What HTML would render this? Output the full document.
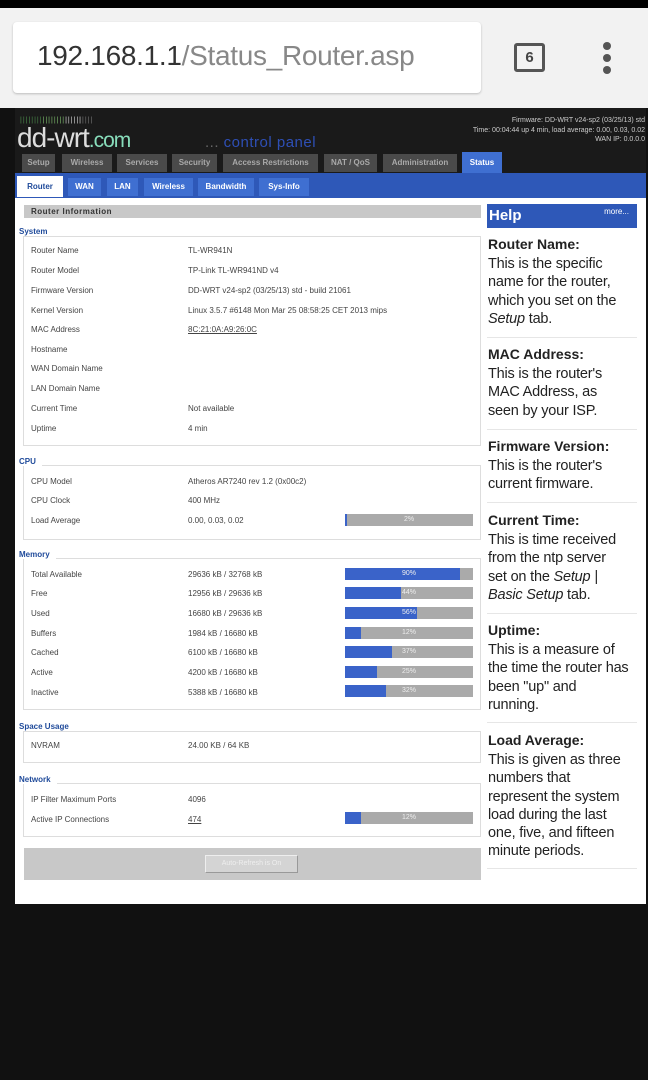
<!DOCTYPE html>
<html><head><meta charset="utf-8"><style>
*{margin:0;padding:0;box-sizing:border-box}
body{width:648px;height:1080px;background:#111;position:relative;overflow:hidden;font-family:"Liberation Sans",sans-serif}
.a{position:absolute;white-space:nowrap}
.lbl{font-size:8px;color:#444}
.fs{position:absolute;border:1px solid #ddd;left:23px;width:458px}
.leg{position:absolute;left:19px;font-size:8px;font-weight:bold;color:#1f4a9a}
.bar{position:absolute;left:345px;width:128px;height:12px;background:#aaa;font-size:7px;color:#eee;text-align:center;line-height:12px}
.bar i{position:absolute;left:0;top:0;bottom:0;background:#3a63c9}
.bar span{position:relative}
.h{font-size:14px;font-weight:bold;color:#222}
.t{font-size:14.5px;color:#222;line-height:18.3px;letter-spacing:-0.2px}
.sep{position:absolute;left:487px;width:150px;border-top:1px solid #e6e6e6}
.tab{position:absolute;top:154px;height:18px;background:#4a4a4a;color:#aaa;font-size:8px;line-height:18px;text-align:center;font-weight:bold}
.st{position:absolute;top:178px;height:18px;background:#3f6fd1;color:#fff;font-size:8px;font-weight:bold;line-height:18px;text-align:center}
</style></head><body>
<div class="a" style="left:0;top:0;width:648px;height:8px;background:#000"></div>
<div class="a" style="left:0;top:8px;width:648px;height:100px;background:#f2f2f2"></div>
<div class="a" style="left:13px;top:22px;width:468px;height:71px;background:#fff;border-radius:4px;box-shadow:0 1px 2px #bbb"></div>
<div class="a" style="left:37px;top:40px;font-size:28px;color:#333;letter-spacing:-0.3px">192.168.1.1<span style="color:#888">/Status_Router.asp</span></div>
<div class="a" style="left:514px;top:43px;width:31px;height:29px;border:3px solid #555;border-radius:3px;font-size:15px;font-weight:bold;color:#444;text-align:center;line-height:23px">6</div>
<div class="a" style="left:603px;top:42px;width:8px;height:8px;border-radius:50%;background:#555"></div>
<div class="a" style="left:603px;top:54px;width:8px;height:8px;border-radius:50%;background:#555"></div>
<div class="a" style="left:603px;top:66px;width:8px;height:8px;border-radius:50%;background:#555"></div>

<div class="a" style="left:15px;top:108px;width:631px;height:796px;background:#fff"></div>
<div class="a" style="left:15px;top:108px;width:631px;height:65px;background:#1a1a1a"></div>
<div class="a" style="left:20px;top:117px;font-size:7px;letter-spacing:1px;color:#4a8a4a">||||||||<span style="color:#7fbf6f">||||||||</span><span style="color:#ddd">||||||</span><span style="color:#777">||||</span></div>
<div class="a" style="left:17px;top:122px;font-size:28px;color:#ddd;letter-spacing:-1px">dd-wrt<span style="font-size:21px;color:#8db">.com</span></div>
<div class="a" style="left:205px;top:134px;font-size:15px;color:#2e4fb5;letter-spacing:0.5px"><span style="color:#666">...</span> control panel</div>
<div class="a" style="right:3px;top:116px;font-size:7px;color:#ccc;text-align:right;line-height:9.5px">Firmware: DD-WRT v24-sp2 (03/25/13) std<br>Time: 00:04:44 up 4 min, load average: 0.00, 0.03, 0.02<br>WAN IP: 0.0.0.0</div>
<div class="tab" style="left:22px;width:33px">Setup</div>
<div class="tab" style="left:62px;width:50px">Wireless</div>
<div class="tab" style="left:117px;width:50px">Services</div>
<div class="tab" style="left:172px;width:45px">Security</div>
<div class="tab" style="left:223px;width:95px">Access Restrictions</div>
<div class="tab" style="left:324px;width:53px">NAT / QoS</div>
<div class="tab" style="left:383px;width:74px">Administration</div>
<div class="a" style="left:462px;top:152px;width:40px;height:21px;background:#3f6fd1;color:#fff;font-size:8px;font-weight:bold;text-align:center;line-height:22px">Status</div>
<div class="a" style="left:15px;top:173px;width:631px;height:25px;background:#2e58b8"></div>
<div class="a" style="left:17px;top:176px;width:46px;height:21px;background:#fff;color:#1f4a9a;font-size:8px;font-weight:bold;text-align:center;line-height:22px">Router</div>
<div class="st" style="left:68px;width:33px">WAN</div>
<div class="st" style="left:107px;width:31px">LAN</div>
<div class="st" style="left:144px;width:49px">Wireless</div>
<div class="st" style="left:198px;width:56px">Bandwidth</div>
<div class="st" style="left:259px;width:50px">Sys-Info</div>

<div class="a" style="left:24px;top:205px;width:457px;height:13px;background:#c8c8c8;font-size:8px;font-weight:bold;color:#333;padding-left:7px;line-height:13px;letter-spacing:.5px">Router Information</div>

<div class="fs" style="top:236px;height:210px"></div><div class="leg a" style="top:227px;background:#fff;padding-right:6px">System</div>
<div class="fs" style="top:465px;height:75px"></div><div class="leg a" style="top:457px;background:#fff;padding-right:6px">CPU</div>
<div class="fs" style="top:558px;height:152px"></div><div class="leg a" style="top:550px;background:#fff;padding-right:6px">Memory</div>
<div class="fs" style="top:731px;height:32px"></div><div class="leg a" style="top:722px;background:#fff;padding-right:6px">Space Usage</div>
<div class="fs" style="top:783px;height:54px"></div><div class="leg a" style="top:775px;background:#fff;padding-right:6px">Network</div>

<div class="a lbl" style="left:31px;top:246px">Router Name</div><div class="a lbl" style="left:188px;top:246px">TL-WR941N</div>
<div class="a lbl" style="left:31px;top:266px">Router Model</div><div class="a lbl" style="left:188px;top:266px">TP-Link TL-WR941ND v4</div>
<div class="a lbl" style="left:31px;top:286px">Firmware Version</div><div class="a lbl" style="left:188px;top:286px">DD-WRT v24-sp2 (03/25/13) std - build 21061</div>
<div class="a lbl" style="left:31px;top:306px">Kernel Version</div><div class="a lbl" style="left:188px;top:306px">Linux 3.5.7 #6148 Mon Mar 25 08:58:25 CET 2013 mips</div>
<div class="a lbl" style="left:31px;top:325px">MAC Address</div><div class="a lbl" style="left:188px;top:325px;text-decoration:underline">8C:21:0A:A9:26:0C</div>
<div class="a lbl" style="left:31px;top:345px">Hostname</div>
<div class="a lbl" style="left:31px;top:364px">WAN Domain Name</div>
<div class="a lbl" style="left:31px;top:384px">LAN Domain Name</div>
<div class="a lbl" style="left:31px;top:404px">Current Time</div><div class="a lbl" style="left:188px;top:404px">Not available</div>
<div class="a lbl" style="left:31px;top:424px">Uptime</div><div class="a lbl" style="left:188px;top:424px">4 min</div>

<div class="a lbl" style="left:31px;top:477px">CPU Model</div><div class="a lbl" style="left:188px;top:477px">Atheros AR7240 rev 1.2 (0x00c2)</div>
<div class="a lbl" style="left:31px;top:496px">CPU Clock</div><div class="a lbl" style="left:188px;top:496px">400 MHz</div>
<div class="a lbl" style="left:31px;top:516px">Load Average</div><div class="a lbl" style="left:188px;top:516px">0.00, 0.03, 0.02</div>
<div class="bar" style="top:514px"><i style="width:2px"></i><span>2%</span></div>

<div class="a lbl" style="left:31px;top:570px">Total Available</div><div class="a lbl" style="left:188px;top:570px">29636 kB / 32768 kB</div><div class="bar" style="top:568px"><i style="width:115px"></i><span>90%</span></div>
<div class="a lbl" style="left:31px;top:589px">Free</div><div class="a lbl" style="left:188px;top:589px">12956 kB / 29636 kB</div><div class="bar" style="top:587px"><i style="width:56px"></i><span>44%</span></div>
<div class="a lbl" style="left:31px;top:609px">Used</div><div class="a lbl" style="left:188px;top:609px">16680 kB / 29636 kB</div><div class="bar" style="top:607px"><i style="width:72px"></i><span>56%</span></div>
<div class="a lbl" style="left:31px;top:629px">Buffers</div><div class="a lbl" style="left:188px;top:629px">1984 kB / 16680 kB</div><div class="bar" style="top:627px"><i style="width:16px"></i><span>12%</span></div>
<div class="a lbl" style="left:31px;top:648px">Cached</div><div class="a lbl" style="left:188px;top:648px">6100 kB / 16680 kB</div><div class="bar" style="top:646px"><i style="width:47px"></i><span>37%</span></div>
<div class="a lbl" style="left:31px;top:668px">Active</div><div class="a lbl" style="left:188px;top:668px">4200 kB / 16680 kB</div><div class="bar" style="top:666px"><i style="width:32px"></i><span>25%</span></div>
<div class="a lbl" style="left:31px;top:688px">Inactive</div><div class="a lbl" style="left:188px;top:688px">5388 kB / 16680 kB</div><div class="bar" style="top:685px"><i style="width:41px"></i><span>32%</span></div>

<div class="a lbl" style="left:31px;top:741px">NVRAM</div><div class="a lbl" style="left:188px;top:741px">24.00 KB / 64 KB</div>
<div class="a lbl" style="left:31px;top:795px">IP Filter Maximum Ports</div><div class="a lbl" style="left:188px;top:795px">4096</div>
<div class="a lbl" style="left:31px;top:815px">Active IP Connections</div><div class="a lbl" style="left:188px;top:815px;text-decoration:underline">474</div>
<div class="bar" style="top:812px"><i style="width:16px"></i><span>12%</span></div>

<div class="a" style="left:24px;top:848px;width:457px;height:32px;background:#c8c8c8"></div>
<div class="a" style="left:205px;top:855px;width:93px;height:18px;background:#d4d4d4;border:1px solid #eee;border-right-color:#999;border-bottom-color:#999;font-size:7px;color:#eee;text-align:center;line-height:16px">Auto-Refresh is On</div>

<div class="a" style="left:487px;top:204px;width:150px;height:24px;background:#2e58b8;color:#fff"><span class="a" style="left:2px;top:3px;font-size:15px;font-weight:bold">Help</span><span class="a" style="right:8px;top:3px;font-size:8px">more...</span></div>
<div class="a" style="left:488px;top:236px;width:142px;white-space:normal">
<div class="h">Router Name:</div>
<div class="t" style="margin-top:3px">This is the specific name for the router, which you set on the <i>Setup</i> tab.</div>
</div>
<div class="sep" style="top:337px"></div>
<div class="a" style="left:488px;top:346px;width:142px;white-space:normal">
<div class="h">MAC Address:</div>
<div class="t" style="margin-top:3px">This is the router's MAC Address, as seen by your ISP.</div></div>
<div class="sep" style="top:429px"></div>
<div class="a" style="left:488px;top:438px;width:142px;white-space:normal">
<div class="h">Firmware Version:</div>
<div class="t" style="margin-top:3px">This is the router's current firmware.</div></div>
<div class="sep" style="top:502px"></div>
<div class="a" style="left:488px;top:512px;width:135px;white-space:normal">
<div class="h">Current Time:</div>
<div class="t" style="margin-top:3px">This is time received from the ntp server set on the <i>Setup | Basic Setup</i> tab.</div></div>
<div class="sep" style="top:613px"></div>
<div class="a" style="left:488px;top:622px;width:142px;white-space:normal">
<div class="h">Uptime:</div>
<div class="t" style="margin-top:3px">This is a measure of the time the router has been "up" and running.</div></div>
<div class="sep" style="top:722px"></div>
<div class="a" style="left:488px;top:732px;width:142px;white-space:normal">
<div class="h">Load Average:</div>
<div class="t" style="margin-top:3px">This is given as three numbers that represent the system load during the last one, five, and fifteen minute periods.</div></div>
<div class="sep" style="top:868px"></div>
</body></html>
